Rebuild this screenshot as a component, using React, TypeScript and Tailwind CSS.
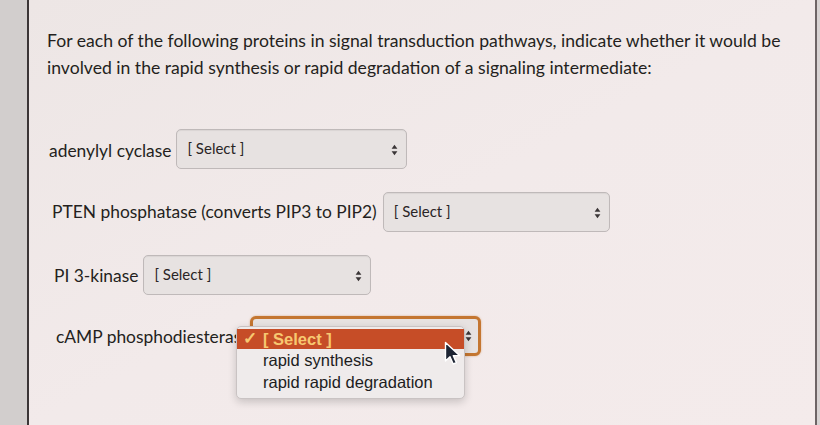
import React from "react";

const Arrows = ({ className = "" }: { className?: string }) => (
  <svg width="7" height="12" viewBox="0 0 7 12" className={className}>
    <path d="M3.5 0.8 L6.4 4.8 L0.6 4.8 Z" fill="#3a3536" />
    <path d="M3.5 11.2 L6.4 7.2 L0.6 7.2 Z" fill="#3a3536" />
  </svg>
);

const SelectBox = ({ width }: { width: number }) => (
  <div
    className="relative h-[40px] shrink-0 rounded-[5px] border border-[#bfb9b9] bg-[#e7e2e1] shadow-[inset_0_1px_1px_rgba(0,0,0,0.06)]"
    style={{ width }}
  >
    <span className="absolute left-[10px] top-[7px] text-[15px] text-[#2a2526]">[ Select ]</span>
    <Arrows className="absolute right-[8px] top-[14px]" />
  </div>
);

const Cursor = () => (
  <svg width="18" height="26" viewBox="0 0 18 26" className="absolute left-[207px] top-[14px]">
    <path
      d="M1.5 1.5 L1.5 20 L6 15.8 L9.2 23 L12.4 21.6 L9.3 14.6 L15.5 14.6 Z"
      fill="#1d2433"
      stroke="#ffffff"
      strokeWidth="1.4"
      strokeLinejoin="round"
    />
  </svg>
);

export default function App() {
  return (
    <div
      className="flex h-[425px] w-[820px] overflow-hidden bg-[#d3cfcf]"
      style={{ fontFamily: "Lato, 'Open Sans', sans-serif" }}
    >
      <div className="w-[27px] shrink-0 bg-[#d2cecd]" />
      <div className="relative flex-1 border-l-2 border-r-2 border-l-[#3b3536] border-r-[#6d6465] bg-gradient-to-br from-[#ede6e5] via-[#f2eaea] to-[#f4ebeb] pl-[18px]">
        <p className="mt-[27px] whitespace-nowrap text-[17.6px] leading-[27px] text-[#241f20]">
          For each of the following proteins in signal transduction pathways, indicate whether it would be
          <br />
          involved in the rapid synthesis or rapid degradation of a signaling intermediate:
        </p>

        <div className="mt-[48px] flex items-center gap-[5px] pl-[2px] text-[17.4px] text-[#241f20]">
          <span className="pt-[5px]">adenylyl cyclase</span>
          <SelectBox width={231} />
        </div>

        <div className="mt-[23px] flex items-center gap-[6px] pl-[5px] text-[17.4px] text-[#241f20]">
          <span className="pt-[1px]">PTEN phosphatase (converts PIP3 to PIP2)</span>
          <SelectBox width={227} />
        </div>

        <div className="mt-[23px] flex items-center gap-[5px] pl-[7px] text-[17.4px] text-[#241f20]">
          <span className="pt-[3px]">PI 3-kinase</span>
          <SelectBox width={228} />
        </div>

        <div className="mt-[21px] flex items-center gap-[5px] pl-[9px] text-[17.4px] text-[#241f20]">
          <span className="w-[189px] shrink-0 whitespace-nowrap pt-[2px]">cAMP phosphodiesterase</span>
          <div className="relative h-[40px] w-[231px] shrink-0 rounded-[6px] border-[3px] border-[#c47631] bg-[#e7e2e1] shadow-[0_0_2px_rgba(196,118,49,0.6)]">
            <Arrows className="absolute right-[6px] top-[11px]" />
            <div
              className="absolute left-[-17px] top-[7px] z-10 w-[229px] rounded-[5px] border border-[#c9c3c3] bg-[#efebeb] pb-[5px] pt-[2px] shadow-[0_3px_8px_rgba(0,0,0,0.18)]"
              style={{ fontFamily: "'Liberation Sans', Arial, sans-serif" }}
            >
              <div className="flex h-[20px] items-center bg-[#c64d27] pl-[6px] text-[16.5px] font-bold text-[#f7c871]">
                <span className="w-[20px] text-[17px]">✓</span>
                <span>[ Select ]</span>
              </div>
              <div className="flex h-[22px] items-center pl-[26px] pt-[1px] text-[16.5px] text-[#201c1d]">
                rapid synthesis
              </div>
              <div className="flex h-[22px] items-center pl-[26px] text-[16.5px] text-[#201c1d]">
                rapid rapid degradation
              </div>
              <Cursor />
            </div>
          </div>
        </div>
      </div>
      <div className="w-[3px] shrink-0 bg-[#d8d3d3]" />
    </div>
  );
}
